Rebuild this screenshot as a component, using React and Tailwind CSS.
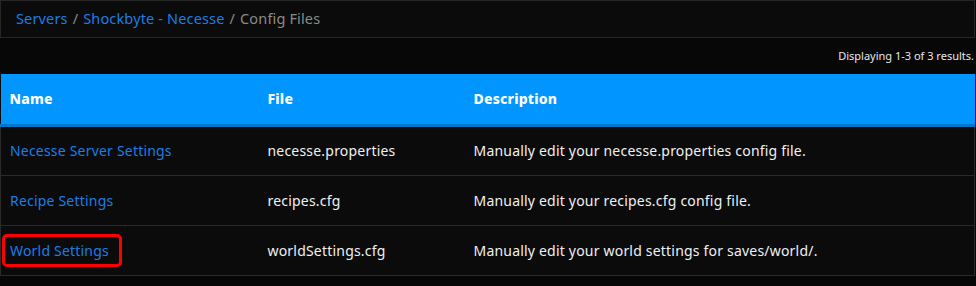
const rows = [
  {
    name: "Necesse Server Settings",
    file: "necesse.properties",
    desc: "Manually edit your necesse.properties config file.",
  },
  {
    name: "Recipe Settings",
    file: "recipes.cfg",
    desc: "Manually edit your recipes.cfg config file.",
  },
  {
    name: "World Settings",
    file: "worldSettings.cfg",
    desc: "Manually edit your world settings for saves/world/.",
    marked: true,
  },
];

const App = () => {
  return (
    <div
      className="w-[976px] h-[286px] bg-[#070707] text-white overflow-hidden"
      style={{ fontFamily: "'Noto Sans', 'Open Sans', sans-serif" }}
    >
      <div className="h-[38px] mr-px bg-[#0b0b0b] border border-[#262626] flex items-center px-[15px] text-[14.5px] tracking-[0.15px]">
        <a className="text-[#1a7ee6]">Servers</a>
        <span className="text-[#8a8a8a] mx-[5px]">/</span>
        <a className="text-[#1a7ee6]">Shockbyte - Necesse</a>
        <span className="text-[#8a8a8a] mx-[5px]">/</span>
        <span className="text-[#8a8a8a]">Config Files</span>
      </div>

      <div className="h-[36px] flex items-center justify-end pr-[2px] text-[11px] text-[#e8e8e8]">
        Displaying 1-3 of 3 results.
      </div>

      <table className="w-[975px] border-collapse bg-[#0b0b0b] text-[14px] tracking-[0.2px]">
        <thead>
          <tr className="h-[51px] bg-[#0095ff] border-b-[3px] border-[#0077cc]">
            <th className="w-[258px] text-left font-extrabold px-[9px]">Name</th>
            <th className="w-[206px] text-left font-extrabold px-[9px]">File</th>
            <th className="text-left font-extrabold px-[9px]">Description</th>
          </tr>
        </thead>
        <tbody>
          {rows.map((r, i) => (
            <tr key={i} className="h-[50px] border border-[#2a2a2a]">
              <td className="px-[9px]">
                {r.marked ? (
                  <span className="relative inline-block">
                    <a className="text-[#1a7ee6]">{r.name}</a>
                    <span className="absolute -left-[8px] -right-[13px] -top-[6px] -bottom-[6px] border-[3px] border-[#ff0000] rounded-[5px]"></span>
                  </span>
                ) : (
                  <a className="text-[#1a7ee6]">{r.name}</a>
                )}
              </td>
              <td className="px-[9px] text-[#f0f0f0]">{r.file}</td>
              <td className="px-[9px] text-[#f0f0f0]">{r.desc}</td>
            </tr>
          ))}
        </tbody>
      </table>
    </div>
  );
};

export default App;
